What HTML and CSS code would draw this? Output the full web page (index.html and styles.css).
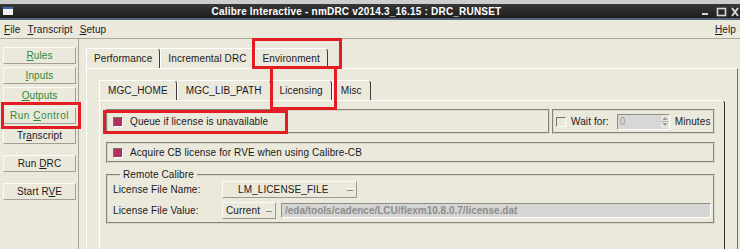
FILE: index.html
```html
<!DOCTYPE html>
<html lang="en">
<head>
  <meta charset="UTF-8" />
  <title>Calibre Interactive - nmDRC</title>
  <link rel="stylesheet" href="styles.css">
</head>
<body>

<div class="strip"></div>
<div class="titlebar">
  <span class="win-icon"></span>
  <span class="title">Calibre Interactive - nmDRC v2014.3_16.15 : DRC_RUNSET</span>
  <svg class="win-controls" width="40" height="14" viewBox="0 0 40 14">
    <rect x="2" y="9" width="6" height="2" fill="#d8d8d8"/>
    <rect x="17.5" y="4.5" width="8" height="7" fill="none" stroke="#d8d8d8" stroke-width="1.6"/>
    <path d="M32 4 L38 12 M38 4 L32 12" stroke="#d8d8d8" stroke-width="2"/>
  </svg>
</div>

<div class="menubar">
  <span><u>F</u>ile</span>
  <span><u>T</u>ranscript</span>
  <span><u>S</u>etup</span>
  <span class="help"><u>H</u>elp</span>
</div>

<div class="main">
  <div class="sidebar">
    <div class="side-btn green"><u>R</u>ules</div>
    <div class="side-btn green"><u>I</u>nputs</div>
    <div class="side-btn green"><u>O</u>utputs</div>
    <div class="side-btn green wide">Run <u>C</u>ontrol</div>
    <div class="side-btn">Tr<u>a</u>nscript</div>
    <div class="side-btn sep">Run <u>D</u>RC</div>
    <div class="side-btn sep">Start R<u>V</u>E</div>
  </div>

  <div class="notebook">
    <div class="tabs">
      <div class="tab">Performance</div>
      <div class="tab">Incremental DRC</div>
      <div class="tab active">Environment</div>
    </div>
    <div class="panel">
      <div class="tabs sub">
        <div class="tab">MGC_HOME</div>
        <div class="tab">MGC_LIB_PATH</div>
        <div class="tab active">Licensing</div>
        <div class="tab">Misc</div>
      </div>
      <div class="subpanel">
        <div class="row">
          <div class="frame grow">
            <span class="check on"></span>
            <span>Queue if license is unavailable</span>
          </div>
          <div class="frame wait">
            <span class="check"></span>
            <span class="wait-label">Wait for:</span>
            <span class="spin">
              <span class="spin-value">0</span>
              <svg class="spin-arrows" width="8" height="13" viewBox="0 0 8 13">
                <path d="M4 2 L6.5 5 L1.5 5 Z" fill="#9a9a9a"/>
                <line x1="0" y1="6.5" x2="8" y2="6.5" stroke="#b8b8b8"/>
                <path d="M1.5 8 L6.5 8 L4 11 Z" fill="#9a9a9a"/>
              </svg>
            </span>
            <span>Minutes</span>
          </div>
        </div>

        <div class="frame acquire">
          <span class="check on"></span>
          <span>Acquire CB license for RVE when using Calibre-CB</span>
        </div>

        <fieldset class="group">
          <legend>Remote Calibre</legend>
          <div class="field">
            <span class="field-label">License File Name:</span>
            <span class="menubtn name"><span>LM_LICENSE_FILE</span><span class="indicator"></span></span>
          </div>
          <div class="field">
            <span class="field-label">License File Value:</span>
            <span class="menubtn current"><span>Current</span><span class="indicator"></span></span>
            <span class="entry">/eda/tools/cadence/LCU/flexm10.8.0.7/license.dat</span>
          </div>
        </fieldset>
      </div>
    </div>
  </div>
</div>

<div class="mark mark-run"></div>
<div class="mark mark-env"></div>
<div class="mark mark-lic"></div>
<div class="mark mark-queue"></div>

</body>
</html>
```

FILE: styles.css
```css
body {
  margin: 0;
  width: 740px;
  height: 249px;
  overflow: hidden;
  position: relative;
  background: #ebe8dc;
  font-family: "Liberation Sans", Arial, sans-serif;
  font-size: 10px;
  letter-spacing: 0.1px;
  color: #1a1a1a;
}

u {
  text-decoration-thickness: 1px;
  text-underline-offset: 1px;
}

/* window frame */
.strip {
  height: 4px;
  background: #cdcdcb;
}

.titlebar {
  height: 14px;
  display: flex;
  align-items: center;
  background: linear-gradient(#383838, #1e1e1e);
  border-bottom: 2px solid #59677b;
  color: #fff;
}

.win-icon {
  width: 10px;
  height: 6px;
  margin-left: 3px;
  background: #f2f2f2;
  border-top: 2px solid #3f6fb8;
}

.title {
  flex: 1;
  text-align: center;
  font-weight: bold;
  font-size: 10px;
  letter-spacing: 0.2px;
}

.menubar {
  height: 18px;
  display: flex;
  align-items: center;
  gap: 7px;
  padding: 0 4px;
  border-bottom: 1px solid #aaa798;
}

.menubar .help {
  margin-left: auto;
}

/* layout */
.main {
  display: flex;
  height: 210px;
}

.sidebar {
  width: 79px;
  border-right: 1px solid #a8a597;
  padding-top: 8px;
  display: flex;
  flex-direction: column;
  gap: 3px;
  box-sizing: border-box;
}

.side-btn {
  margin-left: 3px;
  width: 73px;
  height: 17px;
  box-sizing: border-box;
  text-align: center;
  line-height: 15px;
  border: 1px solid;
  border-color: #fbfbf7 #a3a093 #a3a093 #fbfbf7;
}

.side-btn.green {
  color: #2e8a36;
}

.side-btn.wide {
  letter-spacing: 0.5px;
}

.side-btn.sep {
  margin-top: 8px;
}

.notebook {
  flex: 1;
  margin-left: 7px;
  margin-right: 2px;
  display: flex;
  flex-direction: column;
}

/* tabs */
.tabs {
  display: flex;
  margin-top: 9px;
  height: 20px;
}

.tabs.sub {
  margin-top: 0;
}

.tab {
  box-sizing: border-box;
  height: 20px;
  padding: 0 7px;
  display: flex;
  align-items: center;
  border-top: 1px solid #fff;
  border-left: 1px solid #fff;
  border-right: 1px solid #3c3c3c;
  border-top-right-radius: 4px;
}

.tabs.sub .tab {
  padding: 0 8px;
}

.panel {
  flex: 1;
  display: flex;
  flex-direction: column;
  border-top: 1px solid #fff;
  border-left: 1px solid #fff;
  border-right: 1px solid #6e6e6e;
  padding: 11px 12px 0 12px;
}

.subpanel {
  flex: 1;
  border-top: 1px solid #fff;
  border-left: 1px solid #fff;
  border-right: 1px solid #2e2e2e;
  border-top-right-radius: 4px;
  padding: 8px 9px 0 6px;
}

/* frames and controls */
.frame {
  box-sizing: border-box;
  border: 2px groove #d9d6c8;
  display: flex;
  align-items: center;
}

.row {
  display: flex;
  gap: 2px;
  height: 25px;
}

.grow {
  flex: 1;
  padding-left: 5px;
}

.wait {
  width: 163px;
  padding-left: 2px;
}

.acquire {
  margin-top: 8px;
  height: 21px;
  padding-left: 5px;
}

.check {
  width: 8px;
  height: 8px;
  margin-right: 7px;
  border: 1px solid;
  border-color: #77746a #fff #fff #77746a;
  background: #ebe8dc;
}

.check.on {
  background: #b03060;
}

.wait .check {
  margin-right: 5px;
}

.wait-label {
  margin-right: 8px;
}

.spin {
  box-sizing: border-box;
  width: 53px;
  height: 16px;
  margin-right: 5px;
  display: flex;
  align-items: center;
  justify-content: space-between;
  background: #d7d7d5;
  border: 1px solid;
  border-color: #8f8d85 #fff #fff #8f8d85;
}

.spin-value {
  color: #a0a0a0;
  padding-left: 2px;
}

.spin-arrows {
  background: #e6e4db;
}

.group {
  margin: 6px 0 0 0;
  padding: 1px 2px 3px 5px;
  border: 2px groove #d9d6c8;
  display: flex;
  flex-direction: column;
  gap: 4px;
}

.group legend {
  margin-left: 7px;
  padding: 0 3px;
}

.field {
  display: flex;
  align-items: center;
}

.field-label {
  width: 109px;
}

.menubtn {
  box-sizing: border-box;
  height: 17px;
  display: flex;
  align-items: center;
  border: 1px solid;
  border-color: #fbfbf7 #9c998c #9c998c #fbfbf7;
}

.menubtn.name {
  width: 135px;
  padding-left: 15px;
}

.menubtn.current {
  width: 54px;
  padding-left: 3px;
}

.indicator {
  margin-left: auto;
  margin-right: 3px;
  width: 6px;
  height: 1px;
  border-top: 1px solid #fff;
  border-bottom: 1px solid #8f8c80;
}

.entry {
  flex: 1;
  box-sizing: border-box;
  height: 15px;
  margin-left: 5px;
  padding-left: 3px;
  display: flex;
  align-items: center;
  background: #d5d5d3;
  color: #8c8c8c;
  font-weight: bold;
  letter-spacing: 0;
  border: 1px solid;
  border-color: #8f8d85 #fff #fff #8f8d85;
}

/* red annotation boxes drawn over the screenshot */
.mark {
  position: absolute;
  box-sizing: border-box;
  border: 3px solid #e41d25;
}

.mark-run {
  left: 1px;
  top: 102px;
  width: 80px;
  height: 27px;
}

.mark-env {
  left: 252px;
  top: 38px;
  width: 90px;
  height: 31px;
}

.mark-lic {
  left: 270px;
  top: 66px;
  width: 67px;
  height: 44px;
}

.mark-queue {
  left: 103px;
  top: 110px;
  width: 185px;
  height: 24px;
}
```
